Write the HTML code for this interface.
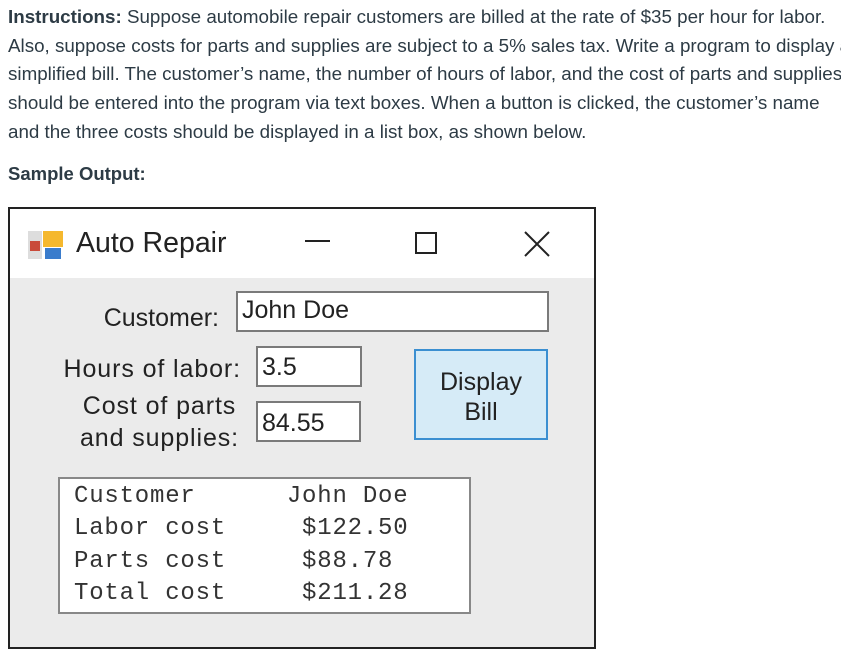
<!DOCTYPE html>
<html><head><style>
body{margin:0;width:841px;height:649px;background:#fff;position:relative;overflow:hidden;font-family:"Liberation Sans",sans-serif;}
.txt{position:absolute;left:8px;top:3px;width:840px;font-size:18.8px;line-height:28.7px;color:#2d3b45;white-space:nowrap;}
.a{position:absolute;}
.lbl{position:absolute;font-size:25px;color:#222;text-align:right;white-space:nowrap;}
.tb{position:absolute;background:#fff;border:2px solid #7a7a7a;box-sizing:border-box;font-size:25px;color:#222;padding-left:4px;line-height:34px;}
.mono{position:absolute;font-family:"Liberation Mono",monospace;font-size:24px;letter-spacing:0.8px;color:#333;white-space:pre;line-height:32.3px;}
</style></head><body>
<div class="txt"><b>Instructions:</b> Suppose automobile repair customers are billed at the rate of $35 per hour for labor.<br>Also, suppose costs for parts and supplies are subject to a 5% sales tax. Write a program to display a<br>simplified bill. The customer’s name, the number of hours of labor, and the cost of parts and supplies<br>should be entered into the program via text boxes. When a button is clicked, the customer’s name<br>and the three costs should be displayed in a list box, as shown below.</div>
<div class="a" style="left:8px;top:163px;font-size:18.5px;font-weight:bold;color:#2d3b45">Sample Output:</div>
<div class="a" style="left:8px;top:207px;width:588px;height:442px;box-sizing:border-box;border:2px solid #222;background:#ebebeb;"></div>
<div class="a" style="left:10px;top:209px;width:584px;height:69px;background:#fff;"></div>
<svg class="a" style="left:28px;top:229px" width="38" height="32"><rect x="0" y="2" width="14" height="28" fill="#ddd"/><rect x="2" y="12" width="10" height="10" fill="#c94a3a"/><rect x="15" y="2" width="20" height="16" fill="#f5b82e"/><rect x="17" y="19" width="16" height="11" fill="#3a7ccc"/></svg>
<div class="a" style="left:76px;top:227px;font-size:28.5px;color:#222">Auto Repair</div>
<div class="a" style="left:305px;top:240px;width:25px;height:2px;background:#222"></div>
<div class="a" style="left:415px;top:232px;width:22px;height:22px;border:2px solid #222;box-sizing:border-box"></div>
<svg class="a" style="left:524px;top:231px" width="26" height="26"><path d="M1 1L25 25M25 1L1 25" stroke="#222" stroke-width="2"/></svg>
<div class="lbl" style="right:622px;top:304px">Customer:</div>
<div class="tb" style="left:236px;top:291px;width:313px;height:41px">John Doe</div>
<div class="lbl" style="right:600px;top:355px;letter-spacing:0.9px">Hours of labor:</div>
<div class="lbl" style="right:602px;top:390px;text-align:center;line-height:32px;letter-spacing:0.9px">Cost of parts<br>and supplies:</div>
<div class="tb" style="left:256px;top:346px;width:106px;height:41px;line-height:38px">3.5</div>
<div class="tb" style="left:256px;top:401px;width:105px;height:41px;line-height:40px">84.55</div>
<div class="a" style="left:414px;top:349px;width:134px;height:91px;box-sizing:border-box;border:2px solid #3b8fd1;background:#d6ebf7;font-size:25px;color:#222;text-align:center;line-height:30px;padding-top:16px">Display<br>Bill</div>
<div class="a" style="left:58px;top:477px;width:413px;height:137px;box-sizing:border-box;border:2px solid #888;background:#fff"></div>
<div class="mono" style="left:74px;top:481px">Customer      John Doe
Labor cost     $122.50
Parts cost     $88.78
Total cost     $211.28</div>
</body></html>
